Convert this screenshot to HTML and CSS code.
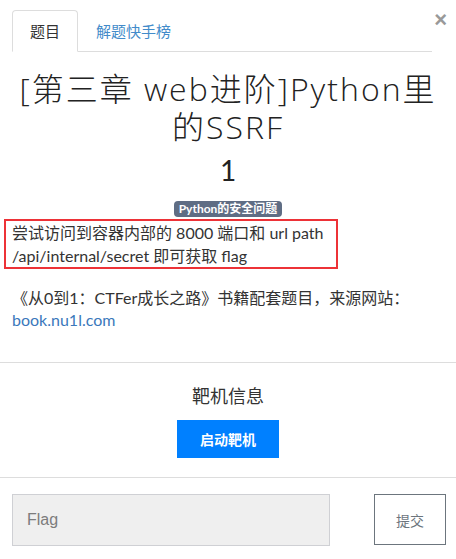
FILE: index.html
```html
<!DOCTYPE html>
<html lang="zh">
<head>
  <meta charset="UTF-8">
  <title>题目</title>
  <link rel="stylesheet" href="styles.css">
</head>
<body>

<div class="modal">
  <button class="close">&times;</button>

  <div class="main">
    <ul class="tabs">
      <li class="tab active">题目</li>
      <li class="tab">解题快手榜</li>
    </ul>

    <h2 class="title">[第三章 web进阶]Python里的SSRF</h2>
    <h3 class="value">1</h3>
    <div class="tags"><span class="badge">Python的安全问题</span></div>

    <div class="desc">尝试访问到容器内部的 8000 端口和 url path /api/internal/secret 即可获取 flag</div>
    <p class="source">《从0到1：CTFer成长之路》书籍配套题目，来源网站：<a href="#">book.nu1l.com</a></p>
  </div>

  <div class="target">
    <h4>靶机信息</h4>
    <button class="start">启动靶机</button>
  </div>

  <div class="submit-row">
    <input type="text" class="flag" placeholder="Flag">
    <button class="submit">提交</button>
  </div>
</div>

</body>
</html>
```

FILE: styles.css
```css
body {
  margin: 0;
  background: #fff;
  font-family: Lato, "Noto Sans CJK SC", sans-serif;
  color: #333;
}
.modal {
  position: relative;
  width: 456px;
}
.close {
  position: absolute;
  top: 9px;
  right: 9px;
  border: none;
  background: none;
  font-size: 22px;
  font-weight: bold;
  color: #999;
  padding: 0;
  line-height: 1;
  cursor: pointer;
}
.main {
  padding: 10px 12px 0;
  height: 352px;
}
.tabs {
  list-style: none;
  margin: 0 12px 0 0;
  padding: 0;
  display: flex;
  border-bottom: 1px solid #ddd;
}
.tab {
  padding: 0 17px;
  height: 40px;
  line-height: 41px;
  font-size: 15px;
  color: #428bca;
  border: 1px solid transparent;
  border-radius: 4px 4px 0 0;
  margin-bottom: -1px;
}
.tab.active {
  color: #333;
  border-color: #ddd;
  border-bottom-color: #fff;
}
.title {
  font-family: "Open Sans", "Noto Sans CJK SC", sans-serif;
  font-weight: 300;
  font-size: 32px;
  line-height: 38px;
  letter-spacing: 2px;
  text-align: center;
  margin: 18px -8px 0;
  color: #222;
}
.value {
  font-weight: 400;
  font-size: 28px;
  line-height: 34px;
  text-align: center;
  margin: 7px 0 0;
  color: #222;
}
.tags {
  text-align: center;
  margin-top: 12px;
  line-height: 16px;
}
.badge {
  display: inline-block;
  background: #5f6d84;
  color: #fff;
  font-size: 12px;
  font-weight: bold;
  line-height: 16px;
  padding: 0 5px;
  border-radius: 4px;
}
.desc {
  width: 334px;
  box-sizing: border-box;
  margin: 2px 0 0 -8px;
  padding: 0 6px;
  border: 2px solid #ed3237;
  font-size: 16px;
  line-height: 23px;
}
.source {
  font-size: 16px;
  line-height: 22px;
  margin: 18px 0 0;
}
.source a {
  color: #3a78bb;
  text-decoration: none;
}
.target {
  border-top: 1px solid #ddd;
  text-align: center;
  padding: 20px 0 19px;
}
.target h4 {
  margin: 0;
  font-size: 18px;
  font-weight: 400;
  line-height: 26px;
}
.start {
  margin-top: 11px;
  width: 102px;
  height: 38px;
  border: none;
  background: #0080ff;
  color: #fff;
  font-family: inherit;
  font-size: 14px;
  font-weight: bold;
  cursor: pointer;
}
.submit-row {
  border-top: 1px solid #ddd;
  padding: 16px 10px 0 12px;
  display: flex;
  justify-content: space-between;
}
.flag {
  width: 318px;
  height: 52px;
  box-sizing: border-box;
  border: 1px solid #cfd0d4;
  background: #efefef;
  padding: 0 14px;
  font-family: "Liberation Sans", Arial, sans-serif;
  font-size: 16px;
}
.flag::placeholder {
  color: #7c7c7c;
}
.submit {
  width: 72px;
  height: 51px;
  border: 1px solid #6c757d;
  background: #fff;
  color: #6c757d;
  font-family: "Noto Sans CJK SC", sans-serif;
  font-size: 14px;
  cursor: pointer;
}
```
